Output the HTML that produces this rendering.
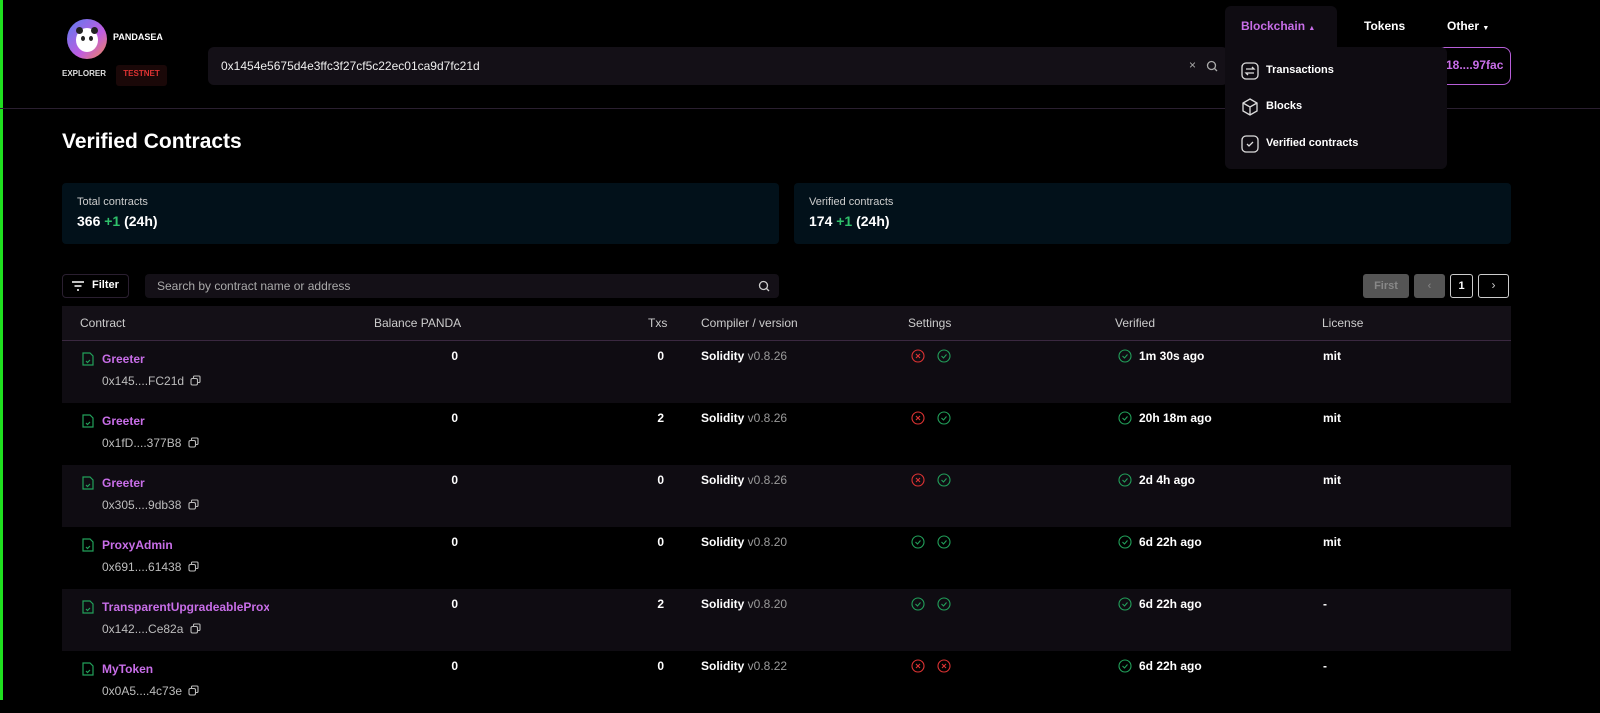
<!DOCTYPE html>
<html><head><meta charset="utf-8"><style>
*{margin:0;padding:0;box-sizing:border-box}
body{width:1600px;height:700px;background:#000;font-family:"Liberation Sans",sans-serif;color:#fff;position:relative;overflow:hidden}
.a{position:absolute;white-space:nowrap}
.b{font-weight:bold}
.row{position:absolute;left:62px;width:1449px;height:62px}
.p{background:#0f0c12}
.n{color:#c86ee8;font-weight:bold;font-size:12px}
.ad{color:#bdbdbd;font-size:12px}
.v{font-size:12px;font-weight:bold}
.g{color:#9a9a9a;font-weight:normal}
</style></head><body>
<div class="a" style="left:0;top:0;width:3px;height:700px;background:#1fe01f"></div>
<!-- logo -->
<div class="a" style="left:67px;top:19px;width:40px;height:40px;border-radius:50%;background:linear-gradient(135deg,#5a7cf0,#c05ce0 60%,#f08a50)"></div>
<div class="a" style="left:76px;top:28px;width:22px;height:24px;border-radius:50%;background:#fff"></div>
<div class="a" style="left:76px;top:27px;width:7px;height:7px;border-radius:50%;background:#222"></div>
<div class="a" style="left:91px;top:27px;width:7px;height:7px;border-radius:50%;background:#222"></div>
<div class="a" style="left:81px;top:36px;width:4px;height:5px;border-radius:50%;background:#222"></div>
<div class="a" style="left:89px;top:36px;width:4px;height:5px;border-radius:50%;background:#222"></div>
<div class="a b" style="left:113px;top:32px;font-size:9px">PANDASEA</div>
<div class="a b" style="left:62px;top:69px;font-size:8px;color:#ddd">EXPLORER</div>
<div class="a b" style="left:116px;top:65px;width:51px;height:21px;background:#1a0808;border-radius:3px;color:#d33;font-size:8px;text-align:center;line-height:17px">TESTNET</div>
<!-- search -->
<div class="a" style="left:208px;top:47px;width:1020px;height:38px;background:#141017;border-radius:6px"></div>
<div class="a" style="left:221px;top:59px;font-size:12px;color:#eee">0x1454e5675d4e3ffc3f27cf5c22ec01ca9d7fc21d</div>
<div class="a" style="left:1189px;top:58px;font-size:12px;color:#aaa">×</div>
<svg class="a" style="left:1206px;top:60px" width="12" height="12" viewBox="0 0 12 12" fill="none" stroke="#aaa" stroke-width="1.3"><circle cx="5.5" cy="5.5" r="4"/><path d="M8.5 8.5l2.5 2.5"/></svg>
<div class="a" style="left:1420px;top:47px;width:91px;height:38px;border:1.5px solid #b65ed8;border-radius:8px"></div>
<div class="a b" style="left:1446px;top:58px;font-size:12px;color:#c86ee8">18....97fac</div>
<div class="a" style="left:0;top:108px;width:1600px;height:1px;background:#2a1f30"></div>
<!-- nav -->
<div class="a" style="left:1225px;top:6px;width:112px;height:46px;background:#0f0c12;border-radius:6px 6px 0 0"></div>
<div class="a b" style="left:1241px;top:19px;font-size:12px;color:#c86ee8">Blockchain <span style="font-size:7px">▲</span></div>
<div class="a b" style="left:1364px;top:19px;font-size:12px">Tokens</div>
<div class="a b" style="left:1447px;top:19px;font-size:12px">Other <span style="font-size:7px">▼</span></div>
<div class="a" style="left:1225px;top:47px;width:222px;height:122px;background:#0f0c12;border-radius:0 6px 6px 6px"></div>
<svg class="a" style="left:1241px;top:62px" width="18" height="18" viewBox="0 0 18 18" fill="none" stroke="#ddd" stroke-width="1.3"><rect x="1" y="1" width="16" height="16" rx="4"/><path d="M5 7h8l-2-2M13 11H5l2 2"/></svg>
<div class="a b" style="left:1266px;top:64px;font-size:11px">Transactions</div>
<svg class="a" style="left:1241px;top:98px" width="18" height="18" viewBox="0 0 18 18" fill="none" stroke="#ddd" stroke-width="1.3"><path d="M9 1l7 4v8l-7 4-7-4V5zM2 5l7 4 7-4M9 9v8"/></svg>
<div class="a b" style="left:1266px;top:100px;font-size:11px">Blocks</div>
<svg class="a" style="left:1241px;top:135px" width="18" height="18" viewBox="0 0 18 18" fill="none" stroke="#ddd" stroke-width="1.3"><rect x="1" y="1" width="16" height="16" rx="4"/><path d="M6 9l2 2 4-4"/></svg>
<div class="a b" style="left:1266px;top:137px;font-size:11px">Verified contracts</div>
<!-- title -->
<div class="a b" style="left:62px;top:130px;font-size:21px">Verified Contracts</div>
<div class="a" style="left:62px;top:183px;width:717px;height:61px;background:#02111a;border-radius:4px"></div>
<div class="a" style="left:77px;top:196px;font-size:11px;color:#ccc">Total contracts</div>
<div class="a b" style="left:77px;top:213px;font-size:14px">366 <span style="color:#2fc06a">+1</span> (24h)</div>
<div class="a" style="left:794px;top:183px;width:717px;height:61px;background:#02111a;border-radius:4px"></div>
<div class="a" style="left:809px;top:196px;font-size:11px;color:#ccc">Verified contracts</div>
<div class="a b" style="left:809px;top:213px;font-size:14px">174 <span style="color:#2fc06a">+1</span> (24h)</div>
<!-- filter -->
<div class="a" style="left:62px;top:274px;width:67px;height:24px;border:1px solid #2a1f30;border-radius:4px"></div>
<svg class="a" style="left:71px;top:280px" width="14" height="12" viewBox="0 0 14 12" stroke="#fff" stroke-width="1.4"><path d="M1 2h12M3.5 6h7M6 10h2"/></svg>
<div class="a b" style="left:92px;top:279px;font-size:11px">Filter</div>
<div class="a" style="left:145px;top:274px;width:634px;height:24px;background:#141017;border-radius:4px"></div>
<div class="a" style="left:157px;top:279px;font-size:12px;color:#aaa">Search by contract name or address</div>
<svg class="a" style="left:758px;top:280px" width="12" height="12" viewBox="0 0 12 12" fill="none" stroke="#ccc" stroke-width="1.3"><circle cx="5.5" cy="5.5" r="4"/><path d="M8.5 8.5l2.5 2.5"/></svg>
<div class="a b" style="left:1363px;top:274px;width:46px;height:24px;background:#555;border-radius:3px;color:#888;font-size:11px;text-align:center;line-height:24px">First</div>
<div class="a" style="left:1414px;top:274px;width:31px;height:24px;background:#555;border-radius:3px;color:#888;font-size:11px;text-align:center;line-height:24px">‹</div>
<div class="a b" style="left:1450px;top:274px;width:23px;height:24px;border:1px solid #ccc;border-radius:3px;font-size:11px;text-align:center;line-height:22px">1</div>
<div class="a" style="left:1478px;top:274px;width:31px;height:24px;border:1px solid #ccc;border-radius:3px;font-size:12px;color:#ccc;text-align:center;line-height:21px">›</div>
<!-- table header -->
<div class="a" style="left:62px;top:306px;width:1449px;height:35px;background:#141017;border-bottom:1px solid #3a2840"></div>
<div class="a" style="left:80px;top:316px;font-size:12px;color:#ccc">Contract</div>
<div class="a" style="left:374px;top:316px;font-size:12px;color:#ccc">Balance PANDA</div>
<div class="a" style="left:648px;top:316px;font-size:12px;color:#ccc">Txs</div>
<div class="a" style="left:701px;top:316px;font-size:12px;color:#ccc">Compiler / version</div>
<div class="a" style="left:908px;top:316px;font-size:12px;color:#ccc">Settings</div>
<div class="a" style="left:1115px;top:316px;font-size:12px;color:#ccc">Verified</div>
<div class="a" style="left:1322px;top:316px;font-size:12px;color:#ccc">License</div>
<div id="rows"></div>
<script>
var R=[["Greeter","0x145....FC21d","0","0","0.8.26","xv","1m 30s ago","mit"],
["Greeter","0x1fD....377B8","0","2","0.8.26","xv","20h 18m ago","mit"],
["Greeter","0x305....9db38","0","0","0.8.26","xv","2d 4h ago","mit"],
["ProxyAdmin","0x691....61438","0","0","0.8.20","vv","6d 22h ago","mit"],
["TransparentUpgradeableProxy","0x142....Ce82a","0","2","0.8.20","vv","6d 22h ago","-"],
["MyToken","0x0A5....4c73e","0","0","0.8.22","xx","6d 22h ago","-"]];
var X='<svg width="14" height="14" viewBox="0 0 14 14" fill="none" stroke="#d33" stroke-width="1.1"><circle cx="7" cy="7" r="6"/><path d="M5 5l4 4M9 5l-4 4"/></svg>';
var V='<svg width="14" height="14" viewBox="0 0 14 14" fill="none" stroke="#22a05a" stroke-width="1.1"><circle cx="7" cy="7" r="6"/><path d="M4.5 7l2 2 3-3.5"/></svg>';
var F='<svg width="12" height="14" viewBox="0 0 12 14" fill="none" stroke="#22a05a" stroke-width="1.2"><path d="M1 1h7l3 3v9H1zM4 9l1.5 1.5L8 8"/></svg>';
var C='<svg width="11" height="11" viewBox="0 0 11 11" fill="none" stroke="#bbb" stroke-width="1.1"><rect x="1" y="3.5" width="6.5" height="6.5" rx="1.5"/><path d="M3.5 3V2a1 1 0 011-1h4.5a1 1 0 011 1v4.5a1 1 0 01-1 1H8"/></svg>';
var h='';R.forEach(function(r,i){var t=341+i*62;
h+='<div class="row'+(i%2==0?' p':'')+'" style="top:'+t+'px"></div>';
h+='<div class="a" style="left:82px;top:'+(t+11)+'px">'+F+'</div>';
h+='<div class="a n" style="left:102px;top:'+(t+11)+'px;max-width:167px;overflow:hidden">'+r[0]+'</div>';
h+='<div class="a ad" style="left:102px;top:'+(t+33)+'px">'+r[1]+' <span style="display:inline-block;vertical-align:-1px;margin-left:3px">'+C+'</span></div>';
h+='<div class="a v" style="left:420px;width:38px;text-align:right;top:'+(t+8)+'px">'+r[2]+'</div>';
h+='<div class="a v" style="left:624px;width:40px;text-align:right;top:'+(t+8)+'px">'+r[3]+'</div>';
h+='<div class="a v" style="left:701px;top:'+(t+8)+'px">Solidity <span class="g">v'+r[4]+'</span></div>';
h+='<div class="a" style="left:911px;top:'+(t+8)+'px">'+(r[5][0]=='x'?X:V)+'</div>';
h+='<div class="a" style="left:937px;top:'+(t+8)+'px">'+(r[5][1]=='x'?X:V)+'</div>';
h+='<div class="a" style="left:1118px;top:'+(t+8)+'px">'+V+'</div>';
h+='<div class="a v" style="left:1139px;top:'+(t+8)+'px">'+r[6]+'</div>';
h+='<div class="a v" style="left:1323px;top:'+(t+8)+'px">'+r[7]+'</div>';});
document.getElementById('rows').innerHTML=h;
</script>
</body></html>
